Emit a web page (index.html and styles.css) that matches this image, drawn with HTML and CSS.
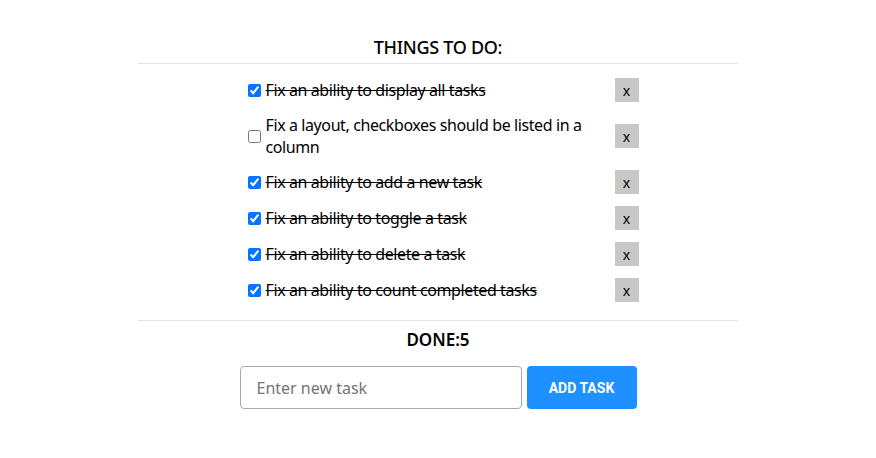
FILE: index.html
```html
<!DOCTYPE html>
<html>
<head>
<meta charset="utf-8">
<link rel="stylesheet" href="styles.css">
</head>
<body>
<div class="app">
  <h2 class="title">THINGS TO DO:</h2>
  <ul class="list">
    <li class="item"><input type="checkbox" checked><span class="text done">Fix an ability to display all tasks</span><button class="del">x</button></li>
    <li class="item"><input type="checkbox"><span class="text">Fix a layout, checkboxes should be listed in a column</span><button class="del">x</button></li>
    <li class="item"><input type="checkbox" checked><span class="text done">Fix an ability to add a new task</span><button class="del">x</button></li>
    <li class="item"><input type="checkbox" checked><span class="text done">Fix an ability to toggle a task</span><button class="del">x</button></li>
    <li class="item"><input type="checkbox" checked><span class="text done">Fix an ability to delete a task</span><button class="del">x</button></li>
    <li class="item"><input type="checkbox" checked><span class="text done">Fix an ability to count completed tasks</span><button class="del">x</button></li>
  </ul>
  <h2 class="count">DONE:5</h2>
  <form class="add">
    <input class="field" type="text" placeholder="Enter new task">
    <button class="addbtn" type="button">ADD TASK</button>
  </form>
</div>
</body>
</html>
```
FILE: styles.css
```css
body {
  margin: 0;
  font-family: "Noto Sans", "Open Sans", sans-serif;
  color: #000;
  background: #fff;
}
.app {
  width: 600px;
  margin: 0 auto;
  padding-top: 36px;
}
.title {
  margin: 0;
  font-size: 18px;
  font-weight: 500;
  letter-spacing: -0.3px;
  text-align: center;
  line-height: 22px;
  padding-bottom: 5px;
  border-bottom: 1px solid #e4e4e4;
}
.list {
  list-style: none;
  width: 395px;
  margin: 14px auto 0;
  padding: 0 0 6px 6px;
}
.item {
  display: flex;
  align-items: center;
  margin-bottom: 12px;
}
.item input {
  margin: 3px 3px 3px 4px;
  width: 13px;
  height: 13px;
  flex: none;
}
.text {
  flex: 1;
  margin-left: 2px;
  font-size: 16px;
  letter-spacing: -0.4px;
  line-height: 22px;
}
.done {
  text-decoration: line-through;
}
.del {
  flex: none;
  width: 24px;
  height: 24px;
  padding: 0;
  border: none;
  background: #c8c8c8;
  font-family: "Noto Sans", sans-serif;
  font-size: 14px;
  color: #000;
}
.count {
  margin: 0;
  border-top: 1px solid #e4e4e4;
  padding-top: 8px;
  font-size: 17px;
  font-weight: 600;
  text-align: center;
  line-height: 22px;
}
.add {
  display: flex;
  justify-content: center;
  gap: 5px;
  margin-top: 15px;
}
.field {
  width: 282px;
  height: 43px;
  box-sizing: border-box;
  border: 1px solid #aaa;
  border-radius: 4px;
  padding: 0 16px;
  font-family: "Noto Sans", sans-serif;
  font-size: 16px;
}
.field::placeholder {
  color: #757575;
}
.addbtn {
  width: 110px;
  height: 43px;
  border: none;
  border-radius: 4px;
  background: #1e90ff;
  color: #fff;
  font-family: "Roboto", sans-serif;
  font-weight: 700;
  font-size: 14px;
}
```
